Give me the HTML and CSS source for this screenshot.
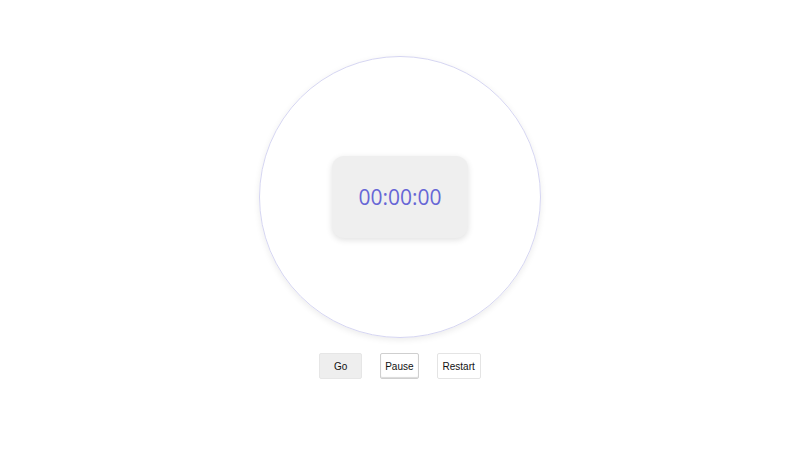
FILE: index.html
```html
<!DOCTYPE html>
<html lang="en">
<head>
    <meta charset="UTF-8">
    <meta name="viewport" content="width=device-width, initial-scale=1.0">
    <title>Stopwatch</title>
    <link rel="stylesheet" href="styles.css">
</head>
<body>
    <main class="watch">
        <div class="dial">
            <div class="display">00:00:00</div>
        </div>
        <div class="controls">
            <button class="btn btn-go">Go</button>
            <button class="btn btn-pause">Pause</button>
            <button class="btn btn-restart">Restart</button>
        </div>
    </main>
</body>
</html>
```

FILE: styles.css
```css
body {
    margin: 0;
    padding: 0;
    background: #fff;
    font-family: "Liberation Sans", Arial, sans-serif;
}
.watch {
    display: flex;
    flex-direction: column;
    align-items: center;
    padding-top: 56px;
}
.dial {
    width: 280px;
    height: 280px;
    border: 1px solid #d6d6f2;
    border-radius: 50%;
    box-shadow: 0 2px 6px rgba(0, 0, 0, 0.08);
    display: flex;
    align-items: center;
    justify-content: center;
}
.display {
    width: 136px;
    height: 82px;
    background: #efefef;
    border-radius: 12px;
    box-shadow: 0 2px 6px rgba(0, 0, 0, 0.12);
    display: flex;
    align-items: center;
    justify-content: center;
    font-family: "Open Sans", "Noto Sans", sans-serif;
    font-size: 21px;
    color: #6666d6;
}
.controls {
    display: flex;
    gap: 18px;
    margin-top: 15px;
}
.btn {
    height: 26px;
    padding: 0 5px;
    font-family: "Liberation Sans", Arial, sans-serif;
    font-size: 10px;
    color: #111;
    background: #fff;
    border: 1px solid #e4e4e4;
    border-radius: 2px;
}
.btn-go {
    min-width: 43px;
    background: #eeeeee;
    border-color: #e6e6e6;
}
.btn-pause {
    padding: 0 4px;
    border-color: #cfcfcf;
    box-shadow: inset 0 -1px 1px rgba(0, 0, 0, 0.15);
}
```
